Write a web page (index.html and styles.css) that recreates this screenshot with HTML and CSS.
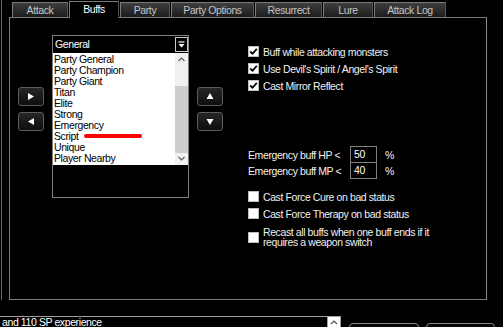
FILE: index.html
```html
<!DOCTYPE html>
<html>
<head>
<meta charset="utf-8">
<link rel="stylesheet" href="styles.css">
</head>
<body>
<div class="screen">
  <div class="outer">
    <div class="tabs">
      <div class="tab w-attack">Attack</div>
      <div class="tab sel w-buffs">Buffs</div>
      <div class="tab w-party">Party</div>
      <div class="tab w-popts">Party Options</div>
      <div class="tab w-res">Resurrect</div>
      <div class="tab w-lure">Lure</div>
      <div class="tab w-log">Attack Log</div>
    </div>
    <div class="panel">
      <div class="btncol">
        <div class="abtn"><svg width="26" height="19" viewBox="0 0 26 19"><path d="M10 6 L16 9.5 L10 13 Z" fill="#fff"/></svg></div>
        <div class="abtn"><svg width="26" height="19" viewBox="0 0 26 19"><path d="M16 6 L10 9.5 L16 13 Z" fill="#fff"/></svg></div>
      </div>
      <div class="combo">
        <div class="combo-head">
          <span class="combo-text">General</span>
          <span class="ddbtn"><svg width="11" height="13" viewBox="0 0 11 13"><path d="M2.5 4 H8.5" stroke="#fff" stroke-width="1.2"/><path d="M2.5 6 H8.5 L5.5 9.5 Z" fill="#fff"/></svg></span>
        </div>
        <div class="droplist">
          <ul class="items">
            <li>Party General</li>
            <li>Party Champion</li>
            <li>Party Giant</li>
            <li>Titan</li>
            <li>Elite</li>
            <li>Strong</li>
            <li>Emergency</li>
            <li>Script<span class="redmark"></span></li>
            <li>Unique</li>
            <li>Player Nearby</li>
          </ul>
          <div class="vscroll">
            <div class="sb-up"><svg width="13" height="13" viewBox="0 0 13 13"><path d="M3.5 8 L6.5 5 L9.5 8" fill="none" stroke="#606060" stroke-width="1.2"/></svg></div>
            <div class="sb-track"><div class="sb-thumb"></div></div>
            <div class="sb-down"><svg width="13" height="11" viewBox="0 0 13 11"><path d="M3.5 3 L6.5 6 L9.5 3" fill="none" stroke="#606060" stroke-width="1.2"/></svg></div>
          </div>
        </div>
      </div>
      <div class="btncol btncol-r">
        <div class="abtn"><svg width="26" height="19" viewBox="0 0 26 19"><path d="M13 6 L16.5 12 L9.5 12 Z" fill="#fff"/></svg></div>
        <div class="abtn"><svg width="26" height="19" viewBox="0 0 26 19"><path d="M9.5 7 L16.5 7 L13 13 Z" fill="#fff"/></svg></div>
      </div>
      <div class="opts">
        <div class="chk-row"><span class="cb"><svg width="9" height="9" viewBox="0 0 9 9"><path d="M1.2 4.5 L3.5 6.8 L7.8 1.8" fill="none" stroke="#000" stroke-width="1.8"/></svg></span><span>Buff while attacking monsters</span></div>
        <div class="chk-row"><span class="cb"><svg width="9" height="9" viewBox="0 0 9 9"><path d="M1.2 4.5 L3.5 6.8 L7.8 1.8" fill="none" stroke="#000" stroke-width="1.8"/></svg></span><span>Use Devil's Spirit / Angel's Spirit</span></div>
        <div class="chk-row"><span class="cb"><svg width="9" height="9" viewBox="0 0 9 9"><path d="M1.2 4.5 L3.5 6.8 L7.8 1.8" fill="none" stroke="#000" stroke-width="1.8"/></svg></span><span>Cast Mirror Reflect</span></div>

        <div class="em-block">
          <div class="em-row"><span class="em-label">Emergency buff HP &lt;</span><span class="em-input">50</span><span class="em-pct">%</span></div>
          <div class="em-row em-row2"><span class="em-label">Emergency buff MP &lt;</span><span class="em-input">40</span><span class="em-pct">%</span></div>
        </div>

        <div class="chk-row chk-gap"><span class="cb"></span><span>Cast Force Cure on bad status</span></div>
        <div class="chk-row"><span class="cb"></span><span>Cast Force Therapy on bad status</span></div>
        <div class="chk-row chk-multi"><span class="cb"></span><span>Recast all buffs when one buff ends if it<br>requires a weapon switch</span></div>
      </div>
    </div>
  </div>
  <div class="bottom">
    <div class="logbox">and 110 SP experience</div>
    <div class="sbup"><svg width="12" height="10" viewBox="0 0 12 10"><path d="M3 7 L6 4 L9 7" fill="none" stroke="#505050" stroke-width="1.2"/></svg></div>
    <div class="bbtn"></div>
    <div class="bbtn bbtn2"></div>
  </div>
</div>
</body>
</html>
```

FILE: styles.css
```css
* { box-sizing: border-box; }
html, body { margin: 0; padding: 0; background: #000; }
body {
  font-family: "Liberation Sans", Arial, sans-serif;
  font-size: 10.5px;
  letter-spacing: -0.4px;
  color: #f2f2f2;
}
.screen {
  width: 503px;
  height: 327px;
  overflow: hidden;
  background: #000;
}
.outer {
  margin-left: 1px;
  border-left: 1px solid #6a6a6a;
  padding-left: 7px;
  height: 300px;
}
.tabs {
  display: flex;
  align-items: flex-end;
  height: 17px;
  padding-left: 3px;
  gap: 1px;
}
.tab {
  height: 15px;
  border: 1px solid #7a7a7a;
  border-bottom: none;
  border-right-color: #555;
  background: linear-gradient(#3e3e3e, #1c1c1c);
  color: #c4c4c4;
  text-align: center;
  line-height: 14px;
  font-size: 10.5px;
}
.tab.sel {
  height: 17px;
  margin-bottom: -1px;
  position: relative;
  z-index: 1;
  background: #000;
  color: #fff;
  line-height: 15px;
}
.w-attack { width: 56px; }
.w-buffs { width: 50px; }
.w-party { width: 50px; }
.w-popts { width: 83px; }
.w-res { width: 67px; }
.w-lure { width: 50px; }
.w-log { width: 72px; }

.panel {
  width: 478px;
  height: 283px;
  border: 1px solid #7a7a7a;
  border-right-color: #8a8a8a;
  padding: 17px 0 0 8px;
  display: flex;
  align-items: flex-start;
}
.btncol {
  margin-top: 52px;
  width: 26px;
  display: flex;
  flex-direction: column;
  gap: 6px;
}
.btncol-r { margin-left: 8px; }
.abtn {
  width: 26px;
  height: 19px;
  border: 1px solid #5c5c5c;
  border-radius: 3px;
  background: linear-gradient(#262626, #0e0e0e);
  display: flex;
  align-items: center;
  justify-content: center;
}
.abtn svg { display: block; margin: -1px; }

.combo {
  position: relative;
  margin-left: 8px;
  width: 137px;
  height: 163px;
  border: 1px solid #808080;
}
.combo-head {
  height: 17px;
  display: flex;
  align-items: flex-start;
  justify-content: space-between;
}
.combo-text {
  padding-left: 2px;
  line-height: 17px;
  color: #fff;
}
.ddbtn {
  margin-top: 1px;
  width: 13px;
  height: 15px;
  border: 1px solid #c8c8c8;
  background: #000;
  display: flex;
  align-items: center;
  justify-content: center;
}
.ddbtn svg { display: block; }

.droplist {
  position: absolute;
  top: 17px;
  left: -1px;
  width: 137px;
  height: 112px;
  background: #fff;
  border-left: 1px solid #808080;
  border-right: 1px solid #808080;
  display: flex;
  z-index: 2;
}
.items {
  list-style: none;
  margin: 0;
  padding: 1px 0 0 1px;
  flex: 1;
  color: #000;
  line-height: 11px;
}
.items li { white-space: nowrap; height: 11px; }
.redmark {
  display: inline-block;
  width: 58px;
  height: 4px;
  margin-left: 6px;
  background: #ff0000;
  border-radius: 2px;
  vertical-align: 2px;
}
.vscroll {
  width: 13px;
  display: flex;
  flex-direction: column;
  background: #f0f0f0;
}
.sb-up { height: 13px; }
.sb-up svg, .sb-down svg { display: block; }
.sb-track { flex: 1; }
.sb-thumb {
  margin-top: 20px;
  height: 67px;
  background: #cdcdcd;
}
.sb-down { height: 11px; }

.opts {
  margin-left: 25px;
  margin-top: 8px;
  display: flex;
  flex-direction: column;
  color: #f0f0f0;
}
.chk-row {
  height: 17px;
  display: flex;
  align-items: center;
  gap: 4px;
  white-space: nowrap;
}
.cb {
  width: 11px;
  height: 11px;
  flex: none;
  background: #fff;
  border: 1px solid #bdbdbd;
  display: flex;
  align-items: center;
  justify-content: center;
}
.cb svg { display: block; }
.em-block { margin-top: 52px; }
.em-row {
  height: 17px;
  display: flex;
  align-items: center;
}
.em-row2 { margin-top: -1px; }
.em-label { width: 102px; }
.em-input {
  width: 27px;
  height: 17px;
  border: 1px solid #808080;
  padding-left: 3px;
  line-height: 15px;
  color: #fff;
}
.em-pct { margin-left: 8px; }
.chk-gap { margin-top: 9px; }
.chk-multi {
  margin-top: 4px;
  height: 22px;
  line-height: 10.5px;
}

.bottom {
  margin-top: 16px;
  display: flex;
  align-items: flex-start;
}
.logbox {
  width: 327px;
  height: 11px;
  border-top: 1px solid #a0a0a0;
  padding-left: 2px;
  line-height: 11px;
  color: #fff;
  white-space: nowrap;
}
.sbup {
  width: 14px;
  height: 11px;
  background: #fff;
  border: 1px solid #a0a0a0;
  border-bottom: none;
}
.sbup svg { display: block; }
.bbtn {
  margin-left: 8px;
  margin-top: 7px;
  width: 70px;
  height: 20px;
  border: 1px solid #8a8a8a;
  border-radius: 4px;
  background: #050505;
}
.bbtn2 { margin-left: 7px; width: 69px; }
```
